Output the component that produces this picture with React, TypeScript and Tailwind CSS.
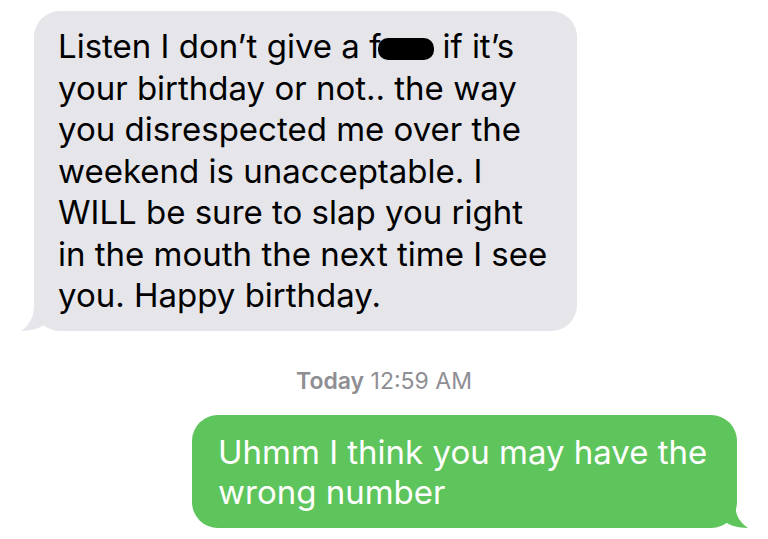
const incoming = [
  'your birthday or not.. the way',
  'you disrespected me over the',
  'weekend is unacceptable. I',
  'WILL be sure to slap you right',
  'in the mouth the next time I see',
  'you. Happy birthday.',
];

export default function App() {
  return (
    <div
      className="w-[768px] h-[539px] bg-white overflow-hidden relative"
      style={{ fontFamily: 'Inter, "Liberation Sans", sans-serif' }}
    >
      {/* received bubble */}
      <div className="relative ml-[34px] mt-[11px] w-[543px] rounded-[26px] bg-[#e5e5ea] pl-[24px] pt-[15px] pb-[14px] text-[33px] leading-[41.5px] text-black whitespace-nowrap">
        <div>
          Listen I don’t give a f
          <span className="inline-block align-middle w-[56px] h-[22px] -ml-[3px] mr-[8px] rounded-[10px] bg-black" />
          if it’s
        </div>
        {incoming.map((line) => (
          <div key={line}>{line}</div>
        ))}
        <svg className="absolute -left-[13px] bottom-0" width="30" height="26" viewBox="0 0 30 26">
          <path d="M13 0 C13 12 9 20 0 26 C10 26 20 23 26 18 L30 0 Z" fill="#e5e5ea" />
        </svg>
      </div>

      <div className="mt-[36px] text-center text-[23px] leading-[28px] text-[#8e8e93]">
        <span className="font-semibold">Today</span> 12:59 AM
      </div>

      {/* sent bubble */}
      <div className="relative ml-[192px] mt-[20px] w-[545px] rounded-[26px] bg-[#5ec45c] pl-[26px] pt-[17px] pb-[16px] text-[33px] leading-[40px] text-white whitespace-nowrap">
        <div>Uhmm I think you may have the</div>
        <div>wrong number</div>
        <svg className="absolute -right-[11px] bottom-0" width="30" height="26" viewBox="0 0 30 26">
          <path d="M17 0 C17 12 21 20 30 26 C20 26 10 23 4 18 L0 0 Z" fill="#5ec45c" />
        </svg>
      </div>
    </div>
  );
}
